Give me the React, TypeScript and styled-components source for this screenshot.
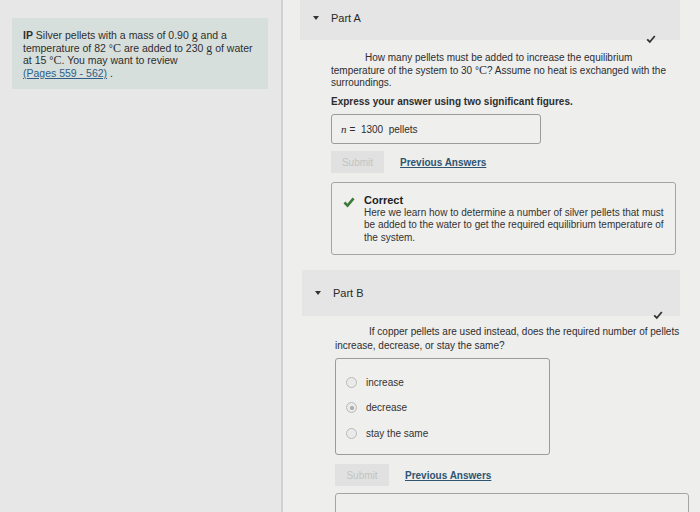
import React from 'react'
import styled, { createGlobalStyle } from 'styled-components'

const Global = createGlobalStyle`
  html, body {
    margin: 0;
    padding: 0;
    background: #ebebea;
    font-family: "Liberation Sans", Arial, sans-serif;
    color: #2b2b2b;
  }
`

const Page = styled.div`
  display: flex;
  width: 700px;
  height: 512px;
  overflow: hidden;
`

const Sidebar = styled.aside`
  width: 283px;
  flex-shrink: 0;
  box-sizing: border-box;
  padding: 18px 13px 0 12px;
  background: #e6e7e6;
  border-right: 2px solid #cfd0cf;
`

const InfoBox = styled.div`
  background: #d7dfdc;
  padding: 11px 12px 10px 11px;
  font-size: 10.5px;
  line-height: 12.5px;
  color: #2e2e2e;
`

const Unit = styled.span`
  font-family: "Liberation Serif", serif;
  font-size: 12px;
  line-height: 1;
`

const Link = styled.a`
  color: #2f5d86;
  text-decoration: underline;
  white-space: nowrap;
`

const Main = styled.main`
  flex: 1;
  min-width: 0;
  padding: 0 20px 0 17px;
  background: #eeeeed;
`

const PartHeader = styled.div<{ $top: number; $h: number; $shift?: number }>`
  display: flex;
  align-items: center;
  gap: 12px;
  margin-top: ${p => p.$top}px;
  margin-left: ${p => p.$shift ?? 0}px;
  height: ${p => p.$h}px;
  padding-left: 13px;
  background: #e4e5e4;
  font-size: 11px;
  color: #2a2a2a;
`

const Caret = styled.span`
  width: 0;
  height: 0;
  border-left: 3.5px solid transparent;
  border-right: 3.5px solid transparent;
  border-top: 4px solid #333;
`

const CheckRow = styled.div<{ $right: number }>`
  display: flex;
  justify-content: flex-end;
  padding-right: ${p => p.$right}px;
  height: 10px;
  margin-top: -6px;
`

const Body = styled.div<{ $left: number; $w: number }>`
  padding-left: ${p => p.$left}px;
  width: ${p => p.$w}px;
  font-size: 10px;
  color: #2d2d2d;
`

const Question = styled.p<{ $lh: number; $top: number }>`
  margin: ${p => p.$top}px 0 0;
  line-height: ${p => p.$lh}px;
  text-indent: 34px;
`

const Instruction = styled.p`
  margin: 7px 0 0;
  font-weight: bold;
  font-size: 10px;
`

const AnswerBox = styled.div`
  margin-top: 7px;
  width: 210px;
  height: 30px;
  box-sizing: border-box;
  border: 1px solid #9a9b9a;
  border-radius: 3px;
  display: flex;
  align-items: center;
  gap: 3px;
  padding-left: 9px;
  background: #efefee;
`

const Var = styled.span`
  font-family: "Liberation Serif", serif;
  font-style: italic;
  font-size: 11px;
`

const Actions = styled.div<{ $top: number }>`
  display: flex;
  align-items: center;
  gap: 16px;
  margin-top: ${p => p.$top}px;
`

const SubmitButton = styled.button<{ $w: number }>`
  width: ${p => p.$w}px;
  height: 22px;
  border: none;
  background: #e0e1e0;
  color: #c3c4c3;
  font-family: inherit;
  font-size: 10px;
  padding: 0;
`

const PrevLink = styled.a`
  font-size: 10px;
  font-weight: bold;
  color: #2f5470;
  text-decoration: underline;
`

const FeedbackBox = styled.div`
  margin-top: 9px;
  width: 345px;
  box-sizing: border-box;
  border: 1px solid #a3a4a3;
  border-radius: 3px;
  display: flex;
  gap: 9px;
  padding: 11px 10px 10px 11px;
  background: #efefee;
`

const FeedbackIcon = styled.div`
  padding: 2px 0 0 0;
`

const FeedbackText = styled.div`
  line-height: 12.5px;
  color: #333;
`

const FeedbackTitle = styled.div`
  font-weight: bold;
  font-size: 11px;
  color: #222;
`

const ChoiceBox = styled.div`
  margin-top: 5px;
  width: 215px;
  box-sizing: border-box;
  border: 1px solid #9a9b9a;
  border-radius: 3px;
  padding: 17px 0 15px 10px;
  display: flex;
  flex-direction: column;
  gap: 13.5px;
  background: #efefee;
`

const Choice = styled.label`
  display: flex;
  align-items: center;
  gap: 9px;
  font-size: 10px;
  color: #333;
  height: 12px;
`

const Radio = styled.span<{ $on?: boolean }>`
  width: 9px;
  height: 9px;
  border-radius: 50%;
  border: 1px solid #b9bab9;
  background: #e9eae9;
  display: flex;
  align-items: center;
  justify-content: center;

  &::after {
    content: '';
    width: 4px;
    height: 4px;
    border-radius: 50%;
    background: ${p => (p.$on ? '#a8a9a8' : 'transparent')};
  }
`

const NextBox = styled.div`
  margin-top: 7px;
  width: 354px;
  height: 30px;
  box-sizing: border-box;
  border: 1px solid #a3a4a3;
  border-radius: 3px;
`

const Check = ({ size = 10, color = '#333', w = 1.8 }: { size?: number; color?: string; w?: number }) => (
  <svg width={size} height={size} viewBox="0 0 10 10">
    <path d="M1.2 5.4 L3.8 8 L8.8 2" fill="none" stroke={color} strokeWidth={w} />
  </svg>
)

const App = () => {
  return (
    <Page>
      <Global />
      <Sidebar>
        <InfoBox>
          <b>IP</b> Silver pellets with a mass of 0.90 <Unit>g</Unit> and a temperature of 82 °<Unit>C</Unit> are
          added to 230 <Unit>g</Unit> of water at 15 °<Unit>C</Unit>. You may want to review{' '}
          <Link>(Pages 559 - 562)</Link> .
        </InfoBox>
      </Sidebar>
      <Main>
        <PartHeader $top={-4} $h={44}>
          <Caret />
          <span>Part A</span>
        </PartHeader>
        <CheckRow $right={24}>
          <Check />
        </CheckRow>
        <Body $left={31} $w={338}>
          <Question $lh={12} $top={8}>
            How many pellets must be added to increase the equilibrium temperature of the system to 30 °
            <Unit>C</Unit>? Assume no heat is exchanged with the surroundings.
          </Question>
          <Instruction>Express your answer using two significant figures.</Instruction>
          <AnswerBox>
            <Var>n</Var>
            <span>= &nbsp;1300 &nbsp;pellets</span>
          </AnswerBox>
          <Actions $top={7}>
            <SubmitButton $w={53}>Submit</SubmitButton>
            <PrevLink>Previous Answers</PrevLink>
          </Actions>
          <FeedbackBox>
            <FeedbackIcon>
              <Check size={12} color="#3d7a3a" w={2.2} />
            </FeedbackIcon>
            <FeedbackText>
              <FeedbackTitle>Correct</FeedbackTitle>
              Here we learn how to determine a number of silver pellets that must be added to the water to get
              the required equilibrium temperature of the system.
            </FeedbackText>
          </FeedbackBox>
        </Body>
        <PartHeader $top={15} $h={46} $shift={2}>
          <Caret />
          <span>Part B</span>
        </PartHeader>
        <CheckRow $right={17}>
          <Check />
        </CheckRow>
        <Body $left={35} $w={354}>
          <Question $lh={14} $top={5}>
            If copper pellets are used instead, does the required number of pellets increase, decrease, or stay
            the same?
          </Question>
          <ChoiceBox>
            <Choice>
              <Radio />
              increase
            </Choice>
            <Choice>
              <Radio $on />
              decrease
            </Choice>
            <Choice>
              <Radio />
              stay the same
            </Choice>
          </ChoiceBox>
          <Actions $top={9}>
            <SubmitButton $w={54}>Submit</SubmitButton>
            <PrevLink>Previous Answers</PrevLink>
          </Actions>
          <NextBox />
        </Body>
      </Main>
    </Page>
  )
}

export default App
